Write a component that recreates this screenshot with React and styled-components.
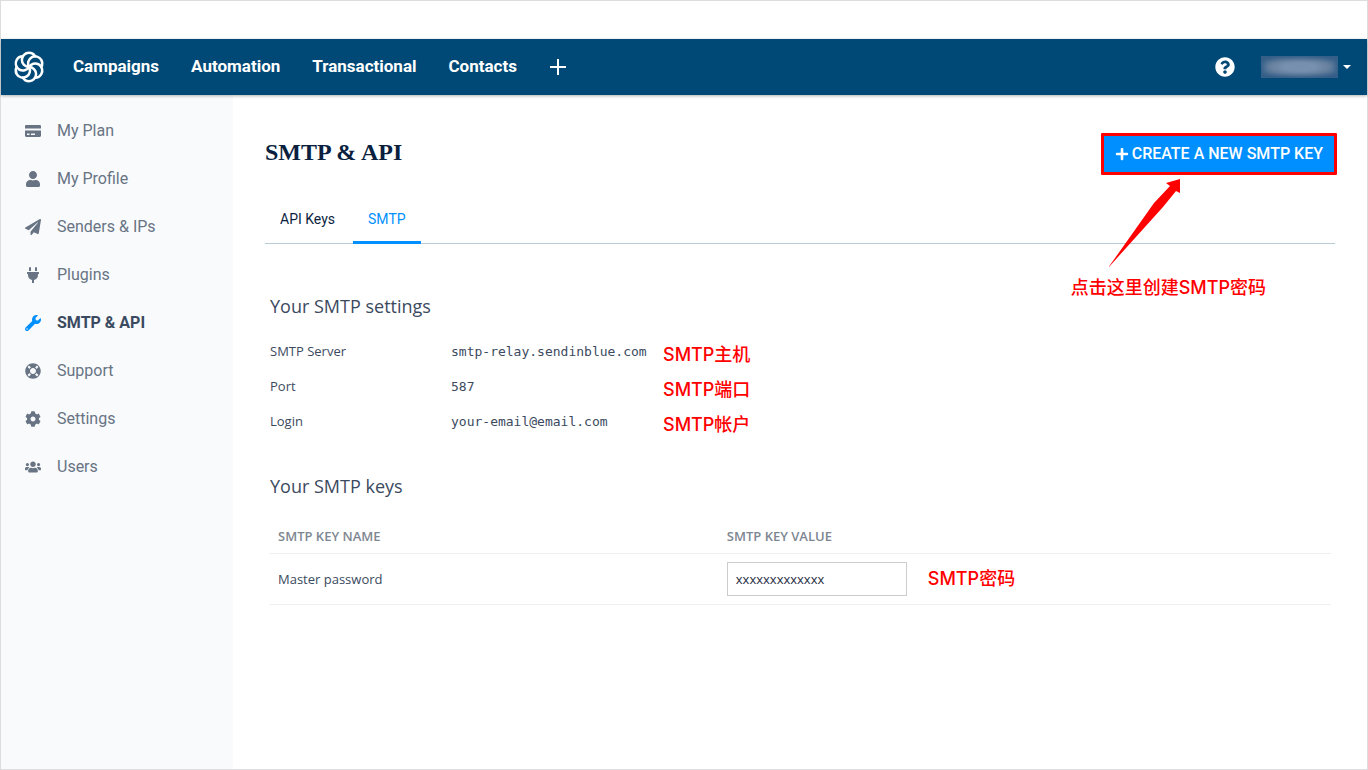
import React from "react";
import styled, { createGlobalStyle, css } from "styled-components";
import {
  FaUser,
  FaPaperPlane,
  FaPlug,
  FaWrench,
  FaLifeRing,
  FaCog,
  FaUsers,
  FaQuestionCircle,
  FaPlus,
} from "react-icons/fa";

const GlobalStyle = createGlobalStyle`
  *, *::before, *::after { box-sizing: border-box; }
  body {
    margin: 0;
    background: #fff;
    color: #3b4a60;
    font-family: "Open Sans", "Noto Sans CJK SC", sans-serif;
    font-size: 13px;
  }
`;

const Page = styled.div`
  display: flex;
  flex-direction: column;
  min-height: 100vh;
  padding-top: 38px;
  border: 1px solid #dddddf;
`;

const TopBar = styled.header`
  display: flex;
  align-items: center;
  height: 56px;
  padding: 0 16px 0 12px;
  background: #004976;
  box-shadow: 0 1px 3px rgba(0, 0, 0, 0.3);
  color: #fff;
  z-index: 1;
`;

const Logo = styled.svg`
  width: 32px;
  height: 32px;
  flex: none;
`;

const TopNav = styled.nav`
  display: flex;
  align-items: center;
  gap: 32px;
  margin-left: 28px;
  flex: 1;
`;

const TopLink = styled.a`
  padding-bottom: 2px;
  color: #fff;
  font: 700 17px/24px Roboto, sans-serif;
  text-decoration: none;
`;

const IconButton = styled.button`
  display: flex;
  align-items: center;
  padding: 0;
  border: 0;
  background: none;
  color: #fff;
  cursor: pointer;
`;

const AccountButton = styled(IconButton)`
  gap: 5px;
  margin-left: 26px;
`;

const HiddenName = styled.span`
  width: 77px;
  height: 22px;
  background: radial-gradient(ellipse closest-side, #7890af 40%, #67819f 75%, #355f88 120%);
  box-shadow: inset 0 0 5px 2px #355f88;
`;

const Body = styled.div`
  display: flex;
  flex: 1;
`;

const Sidebar = styled.nav`
  flex: 0 0 232px;
  padding-top: 12px;
  background: #f9fafc;
`;

const SideLink = styled.a`
  display: flex;
  align-items: center;
  gap: 16px;
  height: 48px;
  padding-left: 24px;
  color: #687484;
  font: 400 16px/24px Roboto, sans-serif;
  text-decoration: none;

  svg {
    width: 16px;
    height: 16px;
  }

  ${(p) =>
    p.$active &&
    css`
      color: #3b4a60;
      font-weight: 700;

      svg {
        color: #008fff;
      }
    `}
`;

const Main = styled.main`
  flex: 1;
  min-width: 0;
  padding: 38px 30px 40px 32px;
`;

const TitleRow = styled.div`
  display: flex;
  align-items: center;
  justify-content: space-between;
`;

const Title = styled.h1`
  margin: 0;
  padding-bottom: 4px;
  color: #0b1f3f;
  font: 700 24px/30px "Liberation Serif", serif;
`;

const ActionArea = styled.div`
  position: relative;
`;

const CreateButton = styled.button`
  display: flex;
  align-items: center;
  gap: 3px;
  height: 42px;
  padding: 0 11px;
  border: 3px solid #ff0000;
  border-radius: 1px;
  background: #008fff;
  color: #fff;
  font: 500 16px/24px Roboto, sans-serif;
  cursor: pointer;
`;

const Callout = styled.div`
  position: absolute;
  top: 46px;
  right: 71px;
  display: flex;
  flex-direction: column;
  gap: 6px;
`;

const Arrow = styled.svg`
  width: 76px;
  height: 90px;
  margin-left: 38px;
`;

const Note = styled.span`
  color: #ff0000;
  font: 500 18px/26px Inter, "Noto Sans CJK SC", sans-serif;
  white-space: nowrap;
`;

const Tabs = styled.div`
  display: flex;
  gap: 3px;
  height: 49px;
  margin: 20px 2px 0 0;
  box-shadow: inset 0 -1px #b9cbd7;
`;

const Tab = styled.button`
  padding: 2px 15px 0;
  border: 0;
  border-bottom: 3px solid ${(p) => (p.$active ? "#008fff" : "transparent")};
  background: none;
  color: ${(p) => (p.$active ? "#008fff" : "#0b1f3f")};
  font: 400 14px/20px Roboto, sans-serif;
  cursor: pointer;
`;

const Section = styled.section`
  margin-top: ${(p) => p.$gap}px;
  padding: 0 6px 0 5px;
`;

const SectionTitle = styled.h2`
  margin: 0;
  font: 400 18px/28px "Open Sans", sans-serif;
`;

const Settings = styled.dl`
  margin: 14px 0 0;
`;

const SettingRow = styled.div`
  display: flex;
  align-items: baseline;
  height: 35px;
  line-height: 35px;
`;

const SettingName = styled.dt`
  flex: 0 0 181px;
`;

const SettingValue = styled.dd`
  flex: 0 0 212px;
  margin: 0;
  font-family: "DejaVu Sans Mono", monospace;
`;

const SettingNote = styled(Note)`
  align-self: center;
  padding-top: 6px;
`;

const KeyTable = styled.table`
  width: 100%;
  margin-top: 19px;
  border-collapse: collapse;
  table-layout: fixed;
`;

const HeadCell = styled.th`
  width: ${(p) => p.$width};
  height: 34px;
  padding: 0 8px;
  border-bottom: 1px solid #eeeff1;
  color: #7e8791;
  font: 600 13px/18px "Open Sans", sans-serif;
  text-align: left;
`;

const Cell = styled.td`
  height: 51px;
  padding: 0 8px;
  border-bottom: 1px solid #eeeff1;
`;

const KeyField = styled.div`
  display: flex;
  align-items: center;
  gap: 21px;
`;

const KeyInput = styled.input`
  width: 180px;
  height: 34px;
  padding: 0 8px;
  border: 1px solid #cccccc;
  border-radius: 0;
  background: #fff;
  color: #1f2d45;
  font: 400 13px/20px "Open Sans", sans-serif;
`;

const CardIcon = () => (
  <svg viewBox="0 0 16 16" fill="currentColor" aria-hidden="true">
    <path d="M1.300 2h13.400c.8 0 1.300.5 1.300 1.200V5.500H0V3.200C0 2.500.5 2 1.300 2z" />
    <path
      fillRule="evenodd"
      d="M0 7.500h16v5.300c0 .7-.5 1.200-1.300 1.200H1.300C.5 14 0 13.500 0 12.800zM2 10.500v1.500h2.500v-1.500zM6 10.500v1.500h4v-1.500z"
    />
  </svg>
);

// One pinwheel arm: leaves the hub, rounds its lobe and stops at the next lobe.
const ARM = "M0 0A7.100 7.100 0 0 1 0 -14.200A7.100 7.100 0 0 1 6.150 -10.650";

const BrandLogo = () => (
  <Logo viewBox="-16 -16 32 32" role="img" aria-label="Home">
    <g fill="none" stroke="#fff" strokeWidth="2.500" strokeLinecap="round">
      {[0, 60, 120, 180, 240, 300].map((angle) => (
        <path key={angle} d={ARM} transform={`rotate(${angle})`} />
      ))}
    </g>
  </Logo>
);

const SIDE_LINKS = [
  ["My Plan", CardIcon],
  ["My Profile", FaUser],
  ["Senders & IPs", FaPaperPlane],
  ["Plugins", FaPlug],
  ["SMTP & API", FaWrench],
  ["Support", FaLifeRing],
  ["Settings", FaCog],
  ["Users", FaUsers],
];

const SETTINGS = [
  ["SMTP Server", "smtp-relay.sendinblue.com", "SMTP主机"],
  ["Port", "587", "SMTP端口"],
  ["Login", "your-email@email.com", "SMTP帐户"],
];

export default function App() {
  return (
    <>
      <GlobalStyle />
      <Page>
        <TopBar>
          <BrandLogo />
          <TopNav>
            {["Campaigns", "Automation", "Transactional", "Contacts"].map((t) => (
              <TopLink key={t} href="#">
                {t}
              </TopLink>
            ))}
            <IconButton aria-label="Add">
              <svg width="18" height="20" viewBox="0 0 18 20" aria-hidden="true">
                <path d="M9 2v16M1 10h16" stroke="currentColor" strokeWidth="2" />
              </svg>
            </IconButton>
          </TopNav>
          <IconButton aria-label="Help">
            <FaQuestionCircle size={20} />
          </IconButton>
          <AccountButton aria-label="Account">
            <HiddenName />
            <svg width="8" height="5" viewBox="0 0 8 5" aria-hidden="true">
              <path d="M0 0h8L4 4z" fill="currentColor" />
            </svg>
          </AccountButton>
        </TopBar>
        <Body>
          <Sidebar>
            {SIDE_LINKS.map(([label, Icon]) => (
              <SideLink key={label} href="#" $active={label === "SMTP & API"}>
                <Icon />
                {label}
              </SideLink>
            ))}
          </Sidebar>
          <Main>
            <TitleRow>
              <Title>SMTP &amp; API</Title>
              <ActionArea>
                <CreateButton>
                  <FaPlus size={14} />
                  CREATE A NEW SMTP KEY
                </CreateButton>
                <Callout>
                  <Arrow viewBox="0 0 76 90" aria-hidden="true">
                    <path d="M-1 89L45 24L61 7L57 4L71 0L71 14L67 12L54 28Z" fill="#ff0000" />
                  </Arrow>
                  <Note>点击这里创建SMTP密码</Note>
                </Callout>
              </ActionArea>
            </TitleRow>
            <Tabs role="tablist">
              <Tab role="tab">API Keys</Tab>
              <Tab role="tab" aria-selected="true" $active>
                SMTP
              </Tab>
            </Tabs>
            <Section $gap={48}>
              <SectionTitle>Your SMTP settings</SectionTitle>
              <Settings>
                {SETTINGS.map(([name, value, note]) => (
                  <SettingRow key={name}>
                    <SettingName>{name}</SettingName>
                    <SettingValue>{value}</SettingValue>
                    <SettingNote>{note}</SettingNote>
                  </SettingRow>
                ))}
              </Settings>
            </Section>
            <Section $gap={33}>
              <SectionTitle>Your SMTP keys</SectionTitle>
              <KeyTable>
                <thead>
                  <tr>
                    <HeadCell $width="42.3%">SMTP KEY NAME</HeadCell>
                    <HeadCell>SMTP KEY VALUE</HeadCell>
                  </tr>
                </thead>
                <tbody>
                  <tr>
                    <Cell>
                      <label htmlFor="master-key">Master password</label>
                    </Cell>
                    <Cell>
                      <KeyField>
                        <KeyInput id="master-key" defaultValue="xxxxxxxxxxxxx" />
                        <Note>SMTP密码</Note>
                      </KeyField>
                    </Cell>
                  </tr>
                </tbody>
              </KeyTable>
            </Section>
          </Main>
        </Body>
      </Page>
    </>
  );
}
